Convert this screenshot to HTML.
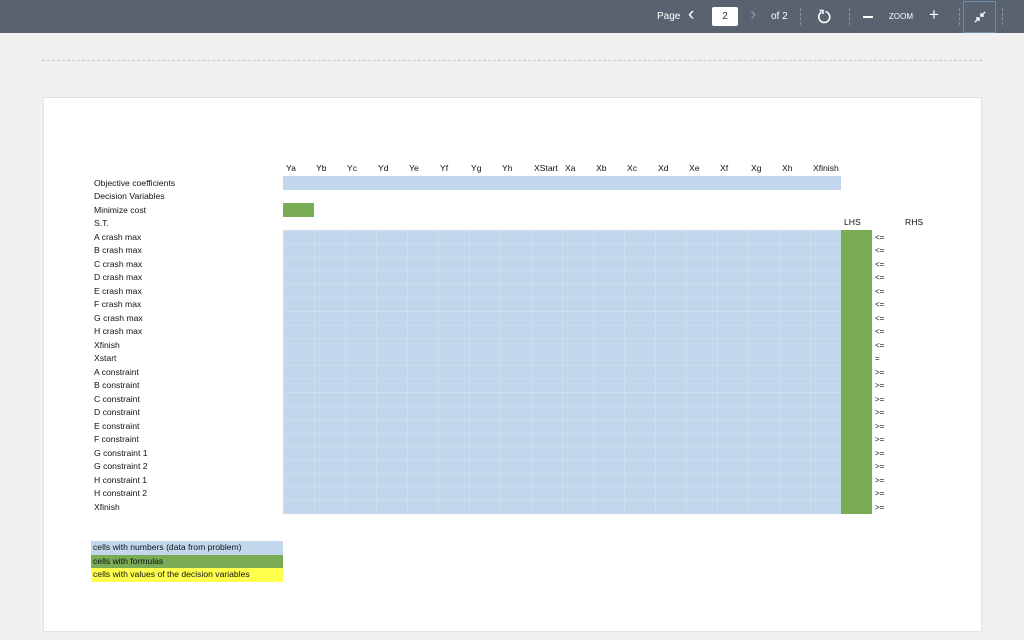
<!DOCTYPE html>
<html><head><style>
*{margin:0;padding:0;box-sizing:border-box}
body{width:1024px;height:640px;background:#f0f0f0;position:relative;overflow:hidden;font-family:"Liberation Sans",sans-serif}
.tb{position:absolute;left:0;top:0;width:1024px;height:33px;background:#596370;color:#fff}
.tb span{position:absolute;font-size:10px;top:11px}
.a{position:absolute}
.t{position:absolute;font-size:8.6px;color:#111;white-space:nowrap;line-height:13.5px}
.sep{position:absolute;top:8px;height:17px;border-left:1px dashed #8a929c}
</style></head><body>
<div class="tb">
<span style="left:657px">Page</span>
<span style="left:688px;top:4px;font-size:19px">&#8249;</span>
<div class="a" style="left:712px;top:7px;width:26px;height:19px;background:#fff;border-radius:2px;color:#333;font-size:10px;text-align:center;line-height:19px">2</div>
<span style="left:750px;top:4px;font-size:19px;color:#8c949e">&#8250;</span>
<span style="left:771px">of 2</span>
<div class="sep" style="left:800px"></div>
<svg class="a" style="left:816px;top:9px" width="16" height="16" viewBox="0 0 16 16"><path d="M5.5 3.2A5.5 5.5 0 1 0 9.5 2.6" fill="none" stroke="#fff" stroke-width="1.6"/><path d="M3.5 1.5h3.5v3.5" fill="none" stroke="#fff" stroke-width="1.5"/></svg>
<div class="sep" style="left:849px"></div>
<div class="a" style="left:863px;top:16px;width:10px;height:2px;background:#fff"></div>
<span style="left:889px;font-size:8px;top:12px">ZOOM</span>
<span style="left:929px;top:5px;font-size:17px">+</span>
<div class="sep" style="left:959px"></div>
<div class="a" style="left:963px;top:1px;width:33px;height:32px;border:1px solid #6f8aa6"></div>
<svg class="a" style="left:973px;top:10px" width="14" height="14" viewBox="0 0 14 14"><path d="M2 12L6 8M3 8h3v3M12 2L8 6M8 3v3h3" fill="none" stroke="#fff" stroke-width="1.4"/></svg>
<div class="sep" style="left:1002px"></div>
</div>
<div class="a" style="left:42px;top:60px;width:940px;border-top:1px dashed #c8c8c8"></div>
<div class="a" style="left:43px;top:97px;width:939px;height:535px;background:#fff;border:1px solid #e2e2e2"></div>
<div class="a" style="left:283px;top:176px;width:558px;height:13.5px;background:#c3d7ec"></div>
<div class="a" style="left:283px;top:203px;width:31px;height:13.5px;background:#7aab55"></div>
<div class="a" style="left:283px;top:230px;width:558px;height:284px;background:#c3d7ec;background-image:linear-gradient(90deg,rgba(255,255,255,.18) 1px,transparent 1px),linear-gradient(rgba(255,255,255,.18) 1px,transparent 1px);background-size:31px 13.5px"></div>
<div class="a" style="left:841px;top:230px;width:31px;height:284px;background:#7aab55"></div>
<div id="hdr"></div>
<div class="a" style="left:91px;top:541px;width:192px;height:13.5px;background:#c3d7ec"></div>
<div class="a" style="left:91px;top:554.5px;width:192px;height:13.5px;background:#7aab55"></div>
<div class="a" style="left:91px;top:568px;width:192px;height:13.5px;background:#ffff4d"></div>
<div class="t" style="left:93px;top:541px">cells with numbers (data from problem)</div>
<div class="t" style="left:93px;top:554.5px">cells with formulas</div>
<div class="t" style="left:93px;top:568px">cells with values of the decision variables</div>
<div class="t" style="left:844px;top:216px">LHS</div>
<div class="t" style="left:905px;top:216px">RHS</div>
<script>
var h=["Ya","Yb","Yc","Yd","Ye","Yf","Yg","Yh","XStart","Xa","Xb","Xc","Xd","Xe","Xf","Xg","Xh","Xfinish"],s="";
var xs=[286,316,347,378,409,440,471,502,534,565,596,627,658,689,720,751,782,813];
h.forEach(function(v,i){s+='<div class="t" style="left:'+xs[i]+'px;top:162px">'+v+'</div>'});
var l=["Objective coefficients","Decision Variables","Minimize cost","S.T.","A crash max","B crash max","C crash max","D crash max","E crash max","F crash max","G crash max","H crash max","Xfinish","Xstart","A constraint","B constraint","C constraint","D constraint","E constraint","F constraint","G constraint 1","G constraint 2","H constraint 1","H constraint 2","Xfinish"];
l.forEach(function(v,i){var y=176.5+i*13.5;s+='<div class="t" style="left:94px;top:'+y+'px">'+v+'</div>';
if(i>=4){var o=i<13?"&lt;=":(i==13?"=":"&gt;=");s+='<div class="t" style="left:875px;top:'+y+'px;font-size:8px">'+o+'</div>'}});
document.getElementById("hdr").outerHTML=s;
</script>
</body></html>
